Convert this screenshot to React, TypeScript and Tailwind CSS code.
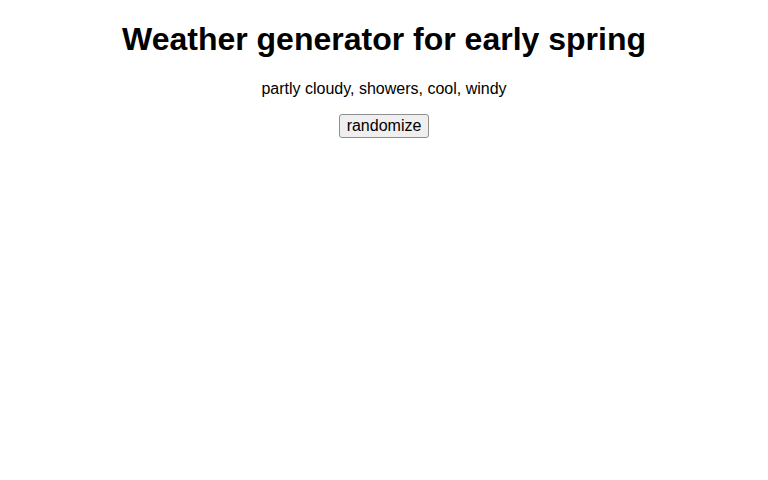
export default function App() {
  return (
    <div className="flex flex-col items-center bg-white text-black font-['Liberation_Sans',Arial,sans-serif] text-base">
      <h1 className="mt-[21px] text-[32px] font-bold leading-[37px]">Weather generator for early spring</h1>
      <p className="mt-[22px] leading-[18px]">partly cloudy, showers, cool, windy</p>
      <div className="mt-[16px]">
        <button className="rounded-[3px] border border-[#8f8f8f] bg-[#efefef] px-[7px] py-[1px] text-base leading-[20px] text-black">
          randomize
        </button>
      </div>
    </div>
  );
}
